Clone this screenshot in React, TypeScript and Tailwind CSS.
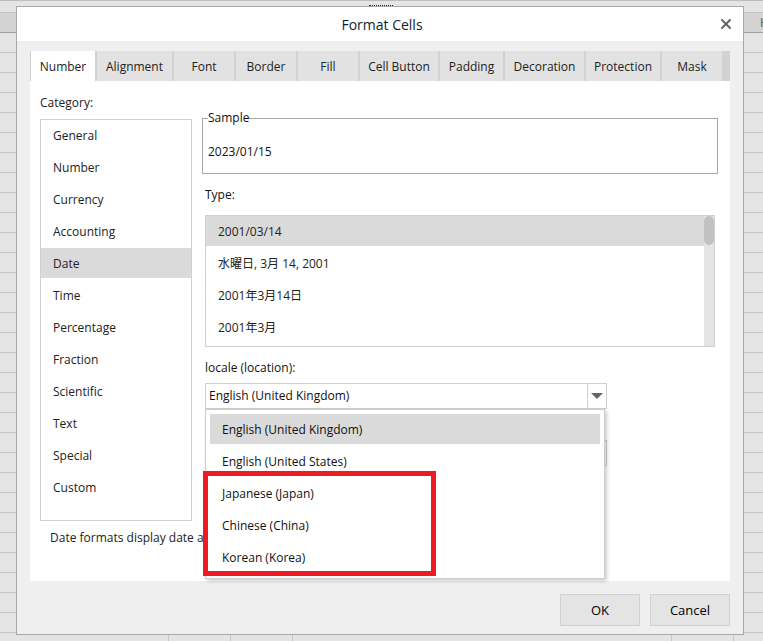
import { X } from "lucide-react";
import { useState } from "react";

const tabs = [
  { name: "Number", width: "w-[67px]" },
  { name: "Alignment", width: "w-[77px]" },
  { name: "Font", width: "w-[62px]" },
  { name: "Border", width: "w-[62px]" },
  { name: "Fill", width: "w-[62px]" },
  { name: "Cell Button", width: "w-[80px]" },
  { name: "Padding", width: "w-[65px]" },
  { name: "Decoration", width: "w-[81px]" },
  { name: "Protection", width: "w-[76px]" },
  { name: "Mask", width: "w-[62px]" },
];

const categories = [
  "General",
  "Number",
  "Currency",
  "Accounting",
  "Date",
  "Time",
  "Percentage",
  "Fraction",
  "Scientific",
  "Text",
  "Special",
  "Custom",
];

const dateTypes = ["2001/03/14", "水曜日, 3月 14, 2001", "2001年3月14日", "2001年3月"];

const locales = [
  "English (United Kingdom)",
  "English (United States)",
  "Japanese (Japan)",
  "Chinese (China)",
  "Korean (Korea)",
];

const sheetRows = Array.from({ length: 30 }, (_, i) => i);

function Sheet() {
  return (
    <div aria-hidden="true" className="flex min-h-screen flex-col border-t border-[#bdbdbd] bg-[#e4e4e4]">
      <div className="h-3 border-b border-[#c6c6c6]" />
      <div className="flex h-5 items-center justify-end overflow-hidden border-b border-[#9e9e9e] bg-[#d3d3d3]">
        <span className="w-[3px] overflow-hidden text-xs text-[#555]">H</span>
      </div>
      {sheetRows.map((row) => (
        <div key={row} className="h-5 border-b border-[#c6c6c6]" />
      ))}
      <div className="flex flex-1">
        <div className="w-[169px] border-r border-[#c6c6c6]" />
        <div className="w-[62px] border-r border-[#c6c6c6]" />
        <div className="w-[62px] border-r border-[#c6c6c6]" />
        <div className="flex-1 border-r border-[#c6c6c6]" />
        <div className="w-[62px] border-r border-[#c6c6c6]" />
        <div className="w-[29px]" />
      </div>
    </div>
  );
}

function OptionList({
  items,
  selected,
  onSelect,
  label,
}: {
  items: string[];
  selected: string;
  onSelect: (item: string) => void;
  label: string;
}) {
  return (
    <ul role="listbox" aria-label={label} className="flex min-w-0 flex-1 flex-col gap-0.5">
      {items.map((item) => (
        <li key={item} role="option" aria-selected={item === selected}>
          <button
            type="button"
            onClick={() => onSelect(item)}
            className={`flex h-[30px] w-full items-center px-3 pt-0.5 text-left whitespace-nowrap ${
              item === selected ? "bg-[#dadada]" : "bg-white"
            }`}
          >
            {item}
          </button>
        </li>
      ))}
    </ul>
  );
}

function DropArrow() {
  return (
    <span className="pointer-events-none absolute inset-y-px right-px flex w-[19px] items-center justify-center border-l border-[#d0d0d0]">
      <svg width="12" height="6" viewBox="0 0 12 6" fill="#666">
        <path d="M0 0h12L6 6z" />
      </svg>
    </span>
  );
}

export default function App() {
  const [tab, setTab] = useState("Number");
  const [category, setCategory] = useState("Date");
  const [type, setType] = useState(dateTypes[0]);
  const [locale, setLocale] = useState(locales[0]);

  return (
    <div className="relative h-screen overflow-hidden font-['Open_Sans','Noto_Sans_CJK_JP',sans-serif] text-xs leading-4 text-[#222]">
      <Sheet />
      <div className="absolute top-[5px] left-[369px] w-6 border-t border-dotted border-[#222]" />

      <div
        role="dialog"
        aria-labelledby="dialog-title"
        className="absolute top-[6px] right-[19px] left-4 border border-[#a8a8a8] bg-[#efefef]"
      >
        <header className="relative flex h-[34px] items-center justify-center bg-white pt-0.5 pl-1">
          <h1 id="dialog-title" className="text-sm text-[#0f1e2e]">
            Format Cells
          </h1>
          <button type="button" aria-label="Close" className="absolute top-2 right-2 p-px text-[#666]">
            <X size={16} strokeWidth={3} />
          </button>
        </header>

        <div className="mx-[13px] mt-[10px] bg-white">
          <div role="tablist" className="flex h-[30px] bg-[#d2d2d2]">
            {tabs.map(({ name, width }) => (
              <button
                key={name}
                type="button"
                role="tab"
                aria-selected={name === tab}
                onClick={() => setTab(name)}
                className={`${width} shrink-0 border-r-2 border-[#d2d2d2] pt-0.5 text-center whitespace-nowrap first:border-l ${
                  name === tab ? "bg-white" : "bg-[#e2e2e2]"
                }`}
              >
                {name}
              </button>
            ))}
          </div>

          <div className="flex gap-[10px] pr-3 pl-[10px]">
            <section className="w-[152px] shrink-0 pt-[14px]">
              <h2>Category:</h2>
              <div className="mt-2 flex border border-[#d0d0d0] pb-[18px]">
                <OptionList label="Category" items={categories} selected={category} onSelect={setCategory} />
              </div>
            </section>

            <section className="min-w-0 flex-1 pt-[29px] text-[#111]">
              <fieldset className="border border-[#a8a8a8] pt-[18px] pb-[13px] pl-[5px]">
                <legend>Sample</legend>
                <p>2023/01/15</p>
              </fieldset>

              <div className="px-[3px]">
                <h2 className="mt-[13px]">Type:</h2>
                <div className="mt-3 flex h-[132px] overflow-hidden border border-[#d0d0d0] text-[#222]">
                  <OptionList label="Type" items={dateTypes} selected={type} onSelect={setType} />
                  <div className="w-[10px] bg-[#e4e4e4]">
                    <div className="h-[29px] rounded-full bg-[#c1c1c1]" />
                  </div>
                </div>

                <label htmlFor="locale" className="mt-[13px] block">
                  locale (location):
                </label>
                <div className="relative mt-[7px] w-[402px]">
                  <select
                    id="locale"
                    value={locale}
                    onChange={(event) => setLocale(event.target.value)}
                    className="block h-[26px] w-full appearance-none border border-[#d0d0d0] bg-white pl-[3px]"
                  >
                    {locales.map((name) => (
                      <option key={name}>{name}</option>
                    ))}
                  </select>
                  <DropArrow />

                  <div className="absolute top-full left-0 z-10 flex w-[400px] border border-[#ccc] bg-white px-1 pt-1 pb-[6px] shadow-[2px_2px_4px_rgba(0,0,0,0.2)]">
                    <OptionList label="Locale" items={locales} selected={locale} onSelect={setLocale} />
                    <div className="pointer-events-none absolute top-[61px] -left-[3px] h-[105px] w-[233px] border-5 border-[#ed1c24]" />
                  </div>
                </div>

                <div className="relative mt-[31px] w-[402px]">
                  <select
                    aria-label="Calendar type"
                    className="block h-[26px] w-full appearance-none border border-[#d0d0d0] bg-white pl-[3px]"
                  />
                </div>
              </div>
            </section>
          </div>
          <p className="pt-[9px] pb-[35px] pl-5">Date formats display date and</p>
        </div>

        <footer className="flex justify-end gap-[10px] px-[13px] pt-[13px] pb-2">
          <button type="button" className="h-8 w-20 border border-[#d0d0d0] bg-[#e4e4e4] text-[13px] text-black">
            OK
          </button>
          <button type="button" className="h-8 w-20 border border-[#d0d0d0] bg-[#e4e4e4] text-[13px] text-black">
            Cancel
          </button>
        </footer>
      </div>
    </div>
  );
}
